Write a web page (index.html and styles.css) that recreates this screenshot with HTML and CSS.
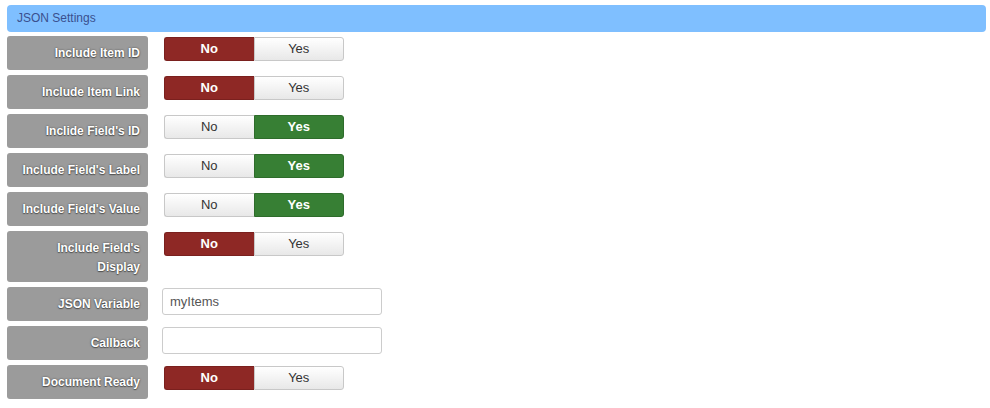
FILE: index.html
```html
<!DOCTYPE html>
<html>
<head>
    <title>JSON Settings</title>
    <link rel="stylesheet" href="styles.css">
</head>
<body>
    <div class="settings">
        <div class="settings-head">JSON Settings</div>

        <div class="row">
            <div class="row-label">Include Item ID</div>
            <div class="toggle">
                <span class="opt no-on">No</span>
                <span class="opt">Yes</span>
            </div>
        </div>

        <div class="row">
            <div class="row-label">Include Item Link</div>
            <div class="toggle">
                <span class="opt no-on">No</span>
                <span class="opt">Yes</span>
            </div>
        </div>

        <div class="row">
            <div class="row-label">Inclide Field's ID</div>
            <div class="toggle">
                <span class="opt">No</span>
                <span class="opt yes-on">Yes</span>
            </div>
        </div>

        <div class="row">
            <div class="row-label">Include Field's Label</div>
            <div class="toggle">
                <span class="opt">No</span>
                <span class="opt yes-on">Yes</span>
            </div>
        </div>

        <div class="row">
            <div class="row-label">Include Field's Value</div>
            <div class="toggle">
                <span class="opt">No</span>
                <span class="opt yes-on">Yes</span>
            </div>
        </div>

        <div class="row">
            <div class="row-label">Include Field's Display</div>
            <div class="toggle">
                <span class="opt no-on">No</span>
                <span class="opt">Yes</span>
            </div>
        </div>

        <div class="row">
            <div class="row-label">JSON Variable</div>
            <input type="text" class="text-field" value="myItems">
        </div>

        <div class="row">
            <div class="row-label">Callback</div>
            <input type="text" class="text-field" value="">
        </div>

        <div class="row">
            <div class="row-label">Document Ready</div>
            <div class="toggle">
                <span class="opt no-on">No</span>
                <span class="opt">Yes</span>
            </div>
        </div>
    </div>
</body>
</html>
```

FILE: styles.css
```css
body {
    margin: 0;
    background: #fff;
    font-family: "Liberation Sans", Arial, sans-serif;
}

.settings {
    padding: 5px 4px 0 7px;
}

.settings-head {
    height: 27px;
    line-height: 26px;
    padding-left: 10px;
    background-color: #7fbfff;
    color: #3a4f8e;
    font-size: 12px;
    border-radius: 4px;
    margin-bottom: 4px;
}

.row {
    display: flex;
    align-items: flex-start;
    margin-bottom: 5px;
}

.row-label {
    box-sizing: border-box;
    width: 141px;
    min-height: 34px;
    padding: 8px 8px 5px 10px;
    background-color: #9b9b9b;
    border-radius: 3px;
    color: #fff;
    font-size: 12px;
    font-weight: bold;
    line-height: 19px;
    text-align: right;
    text-shadow: 0 0 2px rgba(0,0,0,0.55), 0 1px 1px rgba(0,0,0,0.4);
}

.toggle {
    display: flex;
    width: 180px;
    height: 24px;
    margin: 1px 0 0 16px;
}

.opt {
    flex: 1;
    box-sizing: border-box;
    height: 24px;
    line-height: 21px;
    text-align: center;
    font-size: 13px;
    color: #333;
    background: linear-gradient(#ffffff, #e8e8e8);
    border: 1px solid #c8c8c8;
}

.opt:first-child {
    border-radius: 3px 0 0 3px;
    border-right: none;
}

.opt:last-child {
    border-radius: 0 3px 3px 0;
}

.no-on {
    background: #8e2825;
    border-color: #7a201e;
    color: #fff;
    font-weight: bold;
}

.yes-on {
    background: #377f34;
    border-color: #2e6c2b;
    color: #fff;
    font-weight: bold;
}

.text-field {
    box-sizing: border-box;
    width: 220px;
    height: 27px;
    margin: 1px 0 0 14px;
    padding: 0 7px;
    border: 1px solid #ccc;
    border-radius: 3px;
    font-family: "Liberation Sans", Arial, sans-serif;
    font-size: 13px;
    color: #555;
}
```
